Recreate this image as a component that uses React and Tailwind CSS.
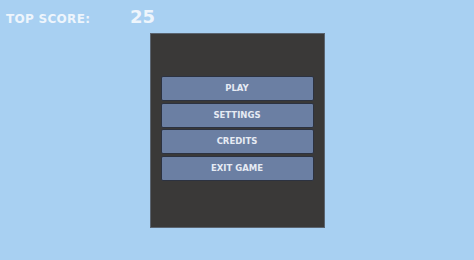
import React from 'react';

const buttons = ['PLAY', 'SETTINGS', 'CREDITS', 'EXIT GAME'];

const App = () => {
  return (
    <div
      className="w-[474px] h-[260px] bg-[#a8d0f2] flex flex-col overflow-hidden"
      style={{ fontFamily: '"DejaVu Sans", "Liberation Sans", sans-serif' }}
    >
      {/* top score bar */}
      <div className="h-[33px] flex items-baseline pt-[8px] pl-[6px] text-[#eef5fc] font-bold">
        <span className="text-[12px] w-[124px] tracking-[0.3px]">TOP SCORE:</span>
        <span className="text-[18px] leading-none">25</span>
      </div>

      {/* menu panel */}
      <div className="mx-auto w-[175px] h-[195px] bg-[#3a3938] border border-[#5a6470] pt-[42px] px-[10px]">
        <div className="flex flex-col gap-[1.5px]">
          {buttons.map((label) => (
            <button
              key={label}
              className="h-[25px] w-full bg-[#6b7fa3] border border-[#2c3240] rounded-[2px] text-[#e6ebf4] text-[8.5px] font-bold flex items-center justify-center"
            >
              {label}
            </button>
          ))}
        </div>
      </div>
    </div>
  );
};

export default App;
